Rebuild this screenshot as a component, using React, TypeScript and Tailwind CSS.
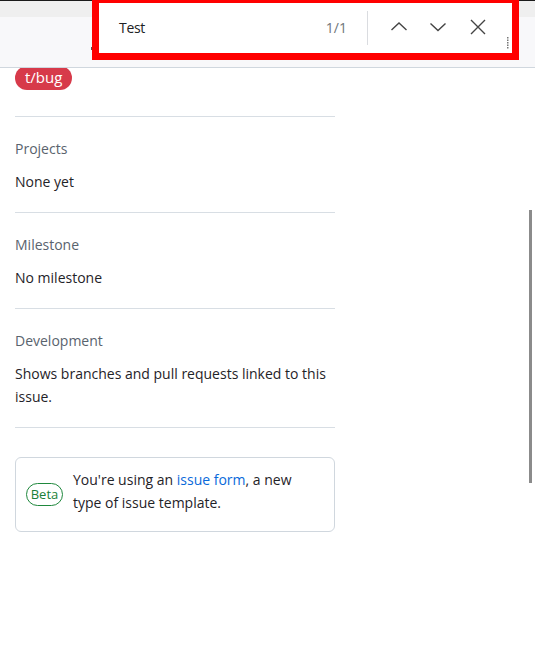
import React from "react";

function Section({ title, children }: { title: string; children: React.ReactNode }) {
  return (
    <div className="border-b border-[#d8dee4] pt-[20px] pb-[19px]">
      <div className="text-[14px] font-medium leading-[23px] text-[#59636e]">{title}</div>
      <div className="mt-[10px] text-[14px] leading-[23px] text-[#1f2328]">{children}</div>
    </div>
  );
}

export default function App() {
  return (
    <div className="relative h-[665px] w-[535px] overflow-hidden bg-white font-['Open_Sans',sans-serif]">
      {/* page content */}
      <div className="ml-[15px] w-[320px] pt-[65px]">
        <div className="border-b border-[#d8dee4] pb-[26px]">
          <span className="inline-flex h-[24px] items-center rounded-full bg-[#d73a4a] px-[10px] text-[15px] leading-none text-white">
            t/bug
          </span>
        </div>
        <Section title="Projects">None yet</Section>
        <Section title="Milestone">No milestone</Section>
        <Section title="Development">Shows branches and pull requests linked to this issue.</Section>
        <div className="mt-[29px] flex rounded-[6px] border border-[#d0d7de] pl-[10px] pr-[16px]">
          <span className="mr-[10px] inline-flex h-[23px] w-[37px] shrink-0 items-center justify-center self-center rounded-full border border-[#1f883d] text-[13px] leading-none text-[#1a7f37]">
            Beta
          </span>
          <div className="pt-[10px] pb-[17px] text-[14px] leading-[23px] text-[#1f2328]">
            You're using an <span className="text-[#0969da]">issue form</span>, a new type of issue template.
          </div>
        </div>
      </div>

      {/* sticky header overlay */}
      <div className="absolute left-0 top-0 w-full">
        <div className="h-[1px] bg-[#1a1a1a]" />
        <div className="h-[16px] bg-[#efefef]" />
        <div className="h-[51px] border-b border-[#d0d7de] bg-[#f8f8fa]" />
      </div>
      <div className="absolute left-[91px] top-[47px] h-[3px] w-[2px] bg-[#555]" />

      {/* find bar with red highlight */}
      <div className="absolute left-[92px] top-0 flex h-[60px] w-[427px] items-center border-x-[7px] border-b-[7px] border-t-[3px] border-[#ff0000] bg-white pb-[2px]">
        <div className="ml-[20px] flex-1 text-[14px] tracking-[-0.3px] text-[#202124]">Test</div>
        <div className="text-[14px] text-[#70757a]">1/1</div>
        <div className="ml-[20px] mt-[2px] h-[34px] w-px bg-[#dadce0]" />
        <svg className="ml-[23px]" width="16" height="10" viewBox="0 0 16 10" fill="none" stroke="#444" strokeWidth="1.4">
          <path d="M0.5 8 L8 1 L15.5 8" />
        </svg>
        <svg className="ml-[23px]" width="16" height="10" viewBox="0 0 16 10" fill="none" stroke="#444" strokeWidth="1.4">
          <path d="M0.5 1.5 L8 8.5 L15.5 1.5" />
        </svg>
        <svg className="ml-[24px]" width="16" height="16" viewBox="0 0 16 16" fill="none" stroke="#444" strokeWidth="1.4">
          <path d="M1 1 L15 15 M15 1 L1 15" />
        </svg>
        <svg className="ml-[20px] mb-[1px] self-end" width="6" height="14" viewBox="0 0 6 14" fill="#777">
          <rect x="1" y="1" width="1.5" height="1.5" />
          <rect x="1" y="3.5" width="1.5" height="1.5" />
          <rect x="1" y="6" width="1.5" height="1.5" />
          <rect x="1" y="8.5" width="1.5" height="1.5" />
          <rect x="1" y="11" width="1.5" height="1.5" />
        </svg>
      </div>

      {/* scrollbar */}
      <div className="absolute left-[529px] top-[210px] h-[273px] w-[3px] bg-[#8b8b8b]" />
    </div>
  );
}
